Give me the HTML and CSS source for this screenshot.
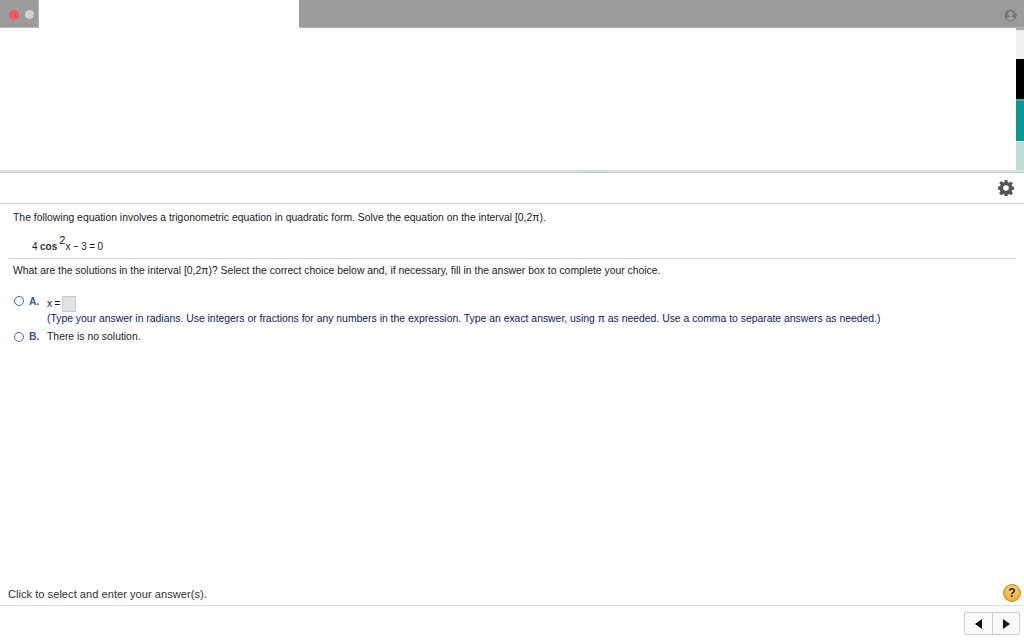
FILE: index.html
```html
<!DOCTYPE html>
<html lang="en">
<head>
<meta charset="utf-8">
<title>Question</title>
<link rel="stylesheet" href="styles.css">
</head>
<body>
<header class="topbar">
  <div class="lights"><span class="light red"></span><span class="light grey"></span></div>
  <div class="tab"></div>
  <div class="topfill">
    <svg class="user" viewBox="0 0 14 14" width="13" height="13"><circle cx="7" cy="7" r="6.5" fill="#777"/><circle cx="7" cy="5.2" r="2.5" fill="#a2a2a2"/><path d="M2.8 10.6c.8-1.8 2.4-2.5 4.2-2.5s3.4.7 4.2 2.5C10 11.9 8.6 12.5 7 12.5s-3-.6-4.2-1.9z" fill="#a2a2a2"/></svg>
  </div>
</header>
<section class="upper">
  <div class="blank"></div>
  <div class="strip">
    <div class="s1"></div><div class="s2"></div><div class="s3"><span class="s3-blue"></span></div><div class="s4"></div>
  </div>
</section>
<div class="rule-top"></div>
<div class="toolbar">
  <svg class="gear" viewBox="0 0 16 16" width="16" height="16"><path fill="#555" fill-rule="evenodd" d="M6.6 0h2.8l.4 2.2 1.2.5 1.9-1.3 2 2-1.3 1.9.5 1.2 2.2.4v2.8l-2.2.4-.5 1.2 1.3 1.9-2 2-1.9-1.3-1.2.5-.4 2.2H6.6l-.4-2.2-1.2-.5-1.9 1.3-2-2 1.3-1.9-.5-1.2L-.1 9.4V6.6l2.2-.4.5-1.2-1.3-1.9 2-2 1.9 1.3 1.2-.5zM8 5.2a2.8 2.8 0 1 0 0 5.6 2.8 2.8 0 0 0 0-5.6z"/></svg>
</div>
<main class="question">
  <p class="intro">The following equation involves a trigonometric equation in quadratic form. Solve the equation on the interval [0,2π).</p>
  <p class="equation">4 <b>cos</b><sup class="exp">2</sup>x − 3 = 0</p>
  <p class="prompt">What are the solutions in the interval [0,2π)? Select the correct choice below and, if necessary, fill in the answer box to complete your choice.</p>
  <div class="choice choice-a">
    <span class="radio"></span><span class="letter">A.</span>
    <div class="body">
      <div class="answer">x&#8201;=<span class="box"></span></div>
      <div class="hint">(Type your answer in radians. Use integers or fractions for any numbers in the expression. Type an exact answer, using π as needed. Use a comma to separate answers as needed.)</div>
    </div>
  </div>
  <div class="choice choice-b">
    <span class="radio"></span><span class="letter">B.</span>
    <div class="body">There is no solution.</div>
  </div>
</main>
<div class="status">
  <span>Click to select and enter your answer(s).</span>
  <span class="help">?</span>
</div>
<footer class="pager">
  <div class="nav">
    <span class="nav-btn"><span class="tri left"></span></span>
    <span class="nav-btn"><span class="tri right"></span></span>
  </div>
</footer>
</body>
</html>
```

FILE: styles.css
```css
* { box-sizing: border-box; }
html, body { margin: 0; padding: 0; }
body {
  width: 1024px;
  height: 640px;
  overflow: hidden;
  background: #fff;
  font-family: "Liberation Sans", Arial, sans-serif;
  font-size: 10.4px;
  color: #222;
  display: flex;
  flex-direction: column;
}
p { margin: 0; }

.topbar { height: 28px; display: flex; flex: none; background: #fff; }
.lights {
  width: 39px;
  background: #9b9b9b;
  border-bottom: 1px solid #bbb;
  border-right: 1px solid #b5b5b5;
  display: flex;
  align-items: flex-start;
  gap: 6px;
  padding: 10px 0 0 9px;
}
.light { width: 9px; height: 9px; border-radius: 50%; }
.red { width: 10px; height: 10px; background: #f9575a; }
.grey { background: #cfcfcf; }
.tab { width: 260px; background: #fff; }
.topfill {
  flex: 1;
  background: #9b9b9b;
  border-bottom: 1px solid #b5b5b5;
  display: flex;
  justify-content: flex-end;
  padding: 9px 7px 0 0;
}
.user { display: block; }

.upper { height: 142px; display: flex; flex: none; }
.blank { width: 1016px; background: #fff; }
.strip { flex: 1; display: flex; flex-direction: column; }
.s1 { height: 31px; background: #f1f1f1; border-top: 2px solid #a9a9a9; }
.s2 { height: 40px; background: #000; }
.s3 { height: 42px; background: #009a8e; border-top: 2px solid #3ba6bd; display: flex; justify-content: flex-end; padding-top: 7px; }
.s3-blue { width: 1px; height: 23px; background: #1c80d8; }
.s4 { height: 29px; background: #bcdcd8; border-top: 1px solid #dfe6ee; }

.rule-top {
  height: 3px;
  flex: none;
  background: linear-gradient(to bottom, #d6e7e1 0, #d6e7e1 2px, #bccbd0 2px);
  display: flex;
  padding-left: 578px;
}
.rule-top::before {
  content: "";
  width: 29px;
  height: 2px;
  background: #c8e0ea;
}
.toolbar {
  height: 31px;
  flex: none;
  border-bottom: 1px solid #cdced6;
  display: flex;
  justify-content: flex-end;
  padding: 7px 10px 0 0;
}
.gear { display: block; }

.question { flex: 1; padding: 0 0 0 8px; }
.intro { padding: 8px 0 0 5px; line-height: 12px; height: 24px; }
.equation {
  padding: 11px 0 0 24px;
  height: 31px;
  line-height: 15px;
  border-bottom: 1px solid #d6d8e6;
  margin-right: 8px;
  font-size: 10px;
  word-spacing: -0.3px;
}
.equation b { color: #333; }
.exp { font-size: 11px; vertical-align: 6px; line-height: 0; margin: 0 0 0 2px; }
.prompt { padding: 6px 0 0 5px; line-height: 12px; height: 32px; }
.choice { display: flex; align-items: flex-start; padding-left: 6px; }
.radio {
  width: 10px; height: 10px; border-radius: 50%;
  border: 1px solid #3a6fc4; background: #fff; flex: none;
}
.letter { width: 18px; margin-left: 5px; font-weight: bold; color: #3a4fb0; flex: none; }
.choice-a { height: 40px; padding-top: 5px; }
.choice-a .letter { line-height: 11px; }
.choice-a .body { color: #0a1a6a; }
.answer { display: flex; align-items: center; color: #222; line-height: 14px; height: 16px; margin-top: 0; white-space: pre; }
.box { width: 14px; height: 16px; background: #e2e2e2; border: 1px solid #bccfe0; margin-left: 2px; }
.hint { line-height: 12px; margin-top: 1px; white-space: nowrap; }
.choice-b { line-height: 12px; }
.choice-b .radio { margin-top: 1px; }

.status {
  height: 26px;
  flex: none;
  display: flex;
  justify-content: space-between;
  align-items: flex-start;
  padding: 7px 3px 0 8px;
  border-bottom: 1px solid #dcdde6;
  color: #333;
  font-size: 11.15px;
  line-height: 14px;
}
.help {
  width: 18px; height: 18px; border-radius: 50%;
  margin-top: -3px;
  background: radial-gradient(circle at 50% 30%, #fbd877, #e9a020);
  border: 1px solid #c98a1a;
  color: #222;
  font-weight: bold;
  font-size: 12px;
  line-height: 16px;
  text-align: center;
}

.pager {
  height: 34px;
  flex: none;
  display: flex;
  justify-content: flex-end;
  padding: 6px 4px 0 0;
}
.nav { display: flex; height: 23px; border: 1px solid #ccc; border-radius: 2px; background: #fafafa; }
.nav-btn { width: 27px; display: flex; align-items: center; justify-content: center; }
.nav-btn + .nav-btn { border-left: 1px solid #ccc; }
.tri { width: 0; height: 0; border-top: 5px solid transparent; border-bottom: 5px solid transparent; }
.tri.left { border-right: 7px solid #111; }
.tri.right { border-left: 7px solid #111; }
```
